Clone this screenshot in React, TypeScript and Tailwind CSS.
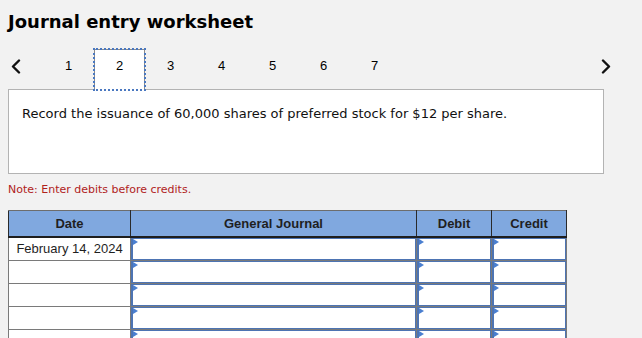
import React from "react";

const tabs = [1, 2, 3, 4, 5, 6, 7];
const rows = ["February 14, 2024", "", "", "", "", ""];

function Chevron({ dir }: { dir: "left" | "right" }) {
  return (
    <svg width="10" height="15" viewBox="0 0 10 15" fill="none">
      <polyline
        points={dir === "left" ? "8,1.5 2,7.5 8,13.5" : "2,1.5 8,7.5 2,13.5"}
        stroke="#111"
        strokeWidth="2.4"
        strokeLinecap="round"
        strokeLinejoin="round"
      />
    </svg>
  );
}

function InputCell() {
  return (
    <td className="border border-[#7a7a7a] p-0 h-[23px]">
      <div className="relative h-[22px] bg-white border border-[#4d74b3] border-l-2">
        <span className="absolute left-0 top-0 w-0 h-0 border-y-[3px] border-y-transparent border-l-[5px] border-l-[#4a7fd0]" />
      </div>
    </td>
  );
}

export default function App() {
  return (
    <div className="w-[642px] h-[338px] overflow-hidden bg-[#f2f2f2] px-2 pt-[10px]">
      <h1 className="text-[18px] leading-[24px] font-bold text-black font-['DejaVu_Sans',Verdana,sans-serif]">
        Journal entry worksheet
      </h1>

      {/* step tabs */}
      <div className="mt-[15px] flex h-[40px] font-['Liberation_Sans',Arial,sans-serif] text-[13px] text-black">
        <div className="w-[35px] flex items-start pt-[10px] pl-[3px]">
          <Chevron dir="left" />
        </div>
        {tabs.map((t) =>
          t === 2 ? (
            <div
              key={t}
              className="relative z-10 w-[51px] h-[41px] bg-white border border-b-0 border-[#8a8a8a] outline-2 outline-dotted outline-[#4a78c0] outline-offset-[-1px] flex justify-center pt-[8px] leading-[16px]"
            >
              {t}
            </div>
          ) : (
            <div key={t} className="w-[51px] flex justify-center pt-[9px] leading-[16px]">
              {t}
            </div>
          )
        )}
        <div className="ml-auto mr-[23px] flex items-start pt-[10px]">
          <Chevron dir="right" />
        </div>
      </div>

      <div className="w-[596px] h-[85px] bg-white border border-[#b3b3b3] pl-[13px] pt-[15px] text-[13px] leading-[18px] text-[#111] font-['DejaVu_Sans',Verdana,sans-serif]">
        Record the issuance of 60,000 shares of preferred stock for $12 per share.
      </div>

      <p className="mt-[8px] text-[11px] leading-[16px] text-[#b0221c] font-['DejaVu_Sans',Verdana,sans-serif]">
        Note: Enter debits before credits.
      </p>

      <table className="mt-[12px] border-collapse table-fixed font-['Liberation_Sans',Arial,sans-serif] text-[13px] text-[#1f1f1f]">
        <colgroup>
          <col className="w-[122px]" />
          <col className="w-[286px]" />
          <col className="w-[75px]" />
          <col className="w-[75px]" />
        </colgroup>
        <thead>
          <tr className="bg-[#80a8df] h-[26px]">
            {["Date", "General Journal", "Debit", "Credit"].map((h) => (
              <th
                key={h}
                className="border border-[#6d6d6d] border-x-[#2a2a2a] border-b-[#1e1e1e] border-b-2 font-bold p-0 text-center"
              >
                {h}
              </th>
            ))}
          </tr>
        </thead>
        <tbody>
          {rows.map((d, i) => (
            <tr key={i}>
              <td className="border border-[#7a7a7a] bg-white h-[23px] p-0 text-center leading-[22px]">
                {d}
              </td>
              <InputCell />
              <InputCell />
              <InputCell />
            </tr>
          ))}
        </tbody>
      </table>
    </div>
  );
}
